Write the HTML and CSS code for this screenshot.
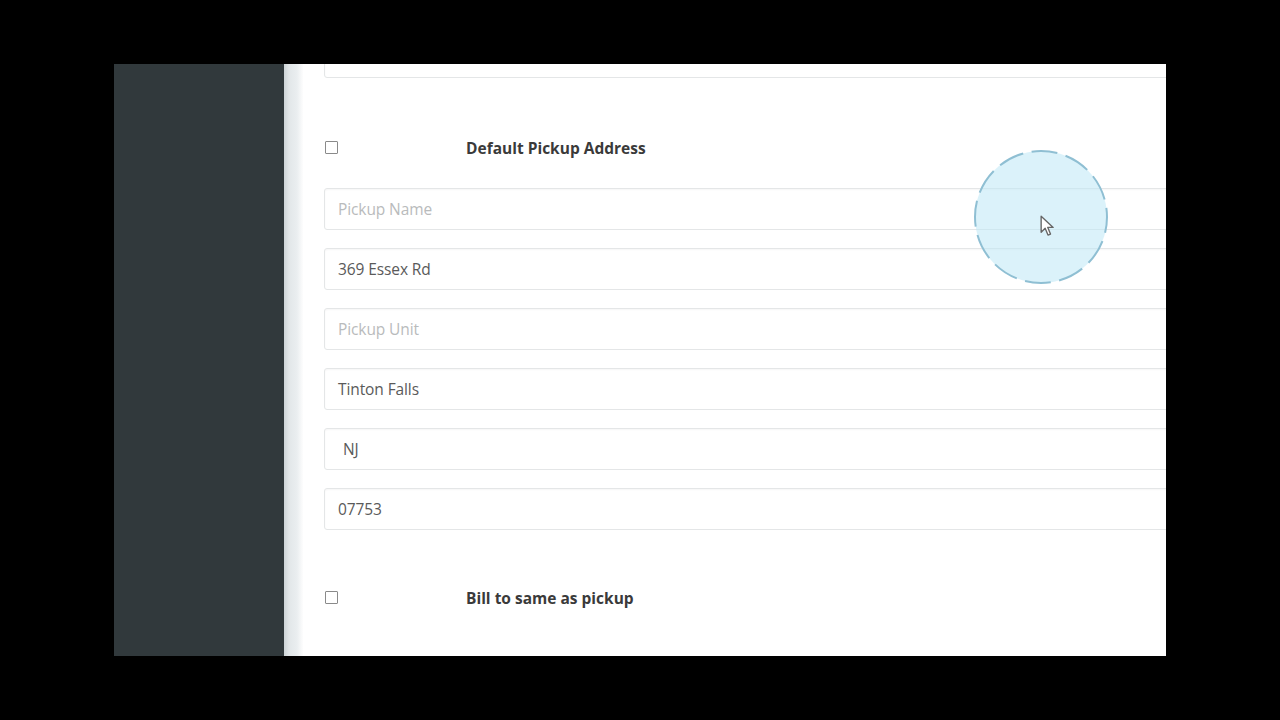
FILE: index.html
```html
<!DOCTYPE html>
<html>
<head>
<meta charset="utf-8">
<link rel="stylesheet" href="styles.css">
</head>
<body>
<div class="frame">
  <aside class="sidebar"></aside>
  <div class="gutter"></div>
  <main class="content">
    <div class="field field-top"></div>
    <div class="check-row first">
      <span class="checkbox"></span>
      <span class="check-label">Default Pickup Address</span>
    </div>
    <div class="field placeholder">Pickup Name</div>
    <div class="field">369 Essex Rd</div>
    <div class="field placeholder">Pickup Unit</div>
    <div class="field">Tinton Falls</div>
    <div class="field select">NJ</div>
    <div class="field">07753</div>
    <div class="check-row second">
      <span class="checkbox"></span>
      <span class="check-label">Bill to same as pickup</span>
    </div>
  </main>
  <div class="click-ring">
    <svg class="ring" width="136" height="136" viewBox="0 0 136 136">
      <circle cx="68" cy="68" r="66" fill="rgba(190,232,246,0.55)" stroke="#8fbfd3" stroke-width="2" stroke-dasharray="26 8.56" stroke-dashoffset="10"/>
    </svg>
    <svg class="cursor" width="16" height="23" viewBox="0 0 14 20">
      <path d="M1 1 L1 15 L4.5 11.5 L7 17.5 L9.2 16.6 L6.8 10.8 L11.5 10.8 Z" fill="#fff" stroke="#666" stroke-width="1.2" stroke-linejoin="round"/>
    </svg>
  </div>
</div>
</body>
</html>
```

FILE: styles.css
```css
html, body {
  margin: 0;
  padding: 0;
  background: #000;
  width: 1280px;
  height: 720px;
  overflow: hidden;
}
body {
  padding: 64px 0 0 114px;
  box-sizing: border-box;
  font-family: "Open Sans", Lato, sans-serif;
}
.frame {
  position: relative;
  width: 1052px;
  height: 592px;
  display: flex;
  overflow: hidden;
  background: #fff;
}
.sidebar {
  width: 170px;
  flex: none;
  background: #31393c;
}
.gutter {
  width: 19px;
  flex: none;
  background: linear-gradient(to right, #cdd4d7 0, #e2e7e9 5px, #eaeef0 13px, #fdfdfd 19px);
}
.content {
  flex: 1;
  padding-left: 21px;
  overflow: hidden;
}
.field {
  width: 880px;
  height: 42px;
  box-sizing: border-box;
  border: 1px solid #e4e6e7;
  border-radius: 3px;
  background: #fff;
  box-shadow: inset 0 1px 2px rgba(0,0,0,0.04);
  padding-left: 13px;
  display: flex;
  align-items: center;
  font-size: 15.5px;
  letter-spacing: -0.1px;
  color: #5a5a5a;
  margin-bottom: 18px;
}
.field-top {
  margin-top: -28px;
  margin-bottom: 0;
}
.field.placeholder {
  color: #b9bbbc;
}
.field.select {
  padding-left: 18px;
}
.check-row {
  display: grid;
  grid-template-columns: 142px auto;
  align-items: center;
  height: 20px;
}
.check-row.first {
  margin: 59px 0 31px;
}
.check-row.second {
  margin-top: 57px;
}
.checkbox {
  width: 13px;
  height: 13px;
  box-sizing: border-box;
  border: 1.5px solid #8a8a8a;
  border-radius: 1px;
  margin-left: 1px;
  margin-top: -2px;
}
.check-label {
  font-size: 15.5px;
  font-weight: 700;
  color: #3a3a3a;
}
.click-ring {
  position: absolute;
  left: 859px;
  top: 85px;
  width: 136px;
  height: 136px;
}
.ring {
  display: block;
}
.cursor {
  position: absolute;
  left: 67px;
  top: 66px;
}
```
